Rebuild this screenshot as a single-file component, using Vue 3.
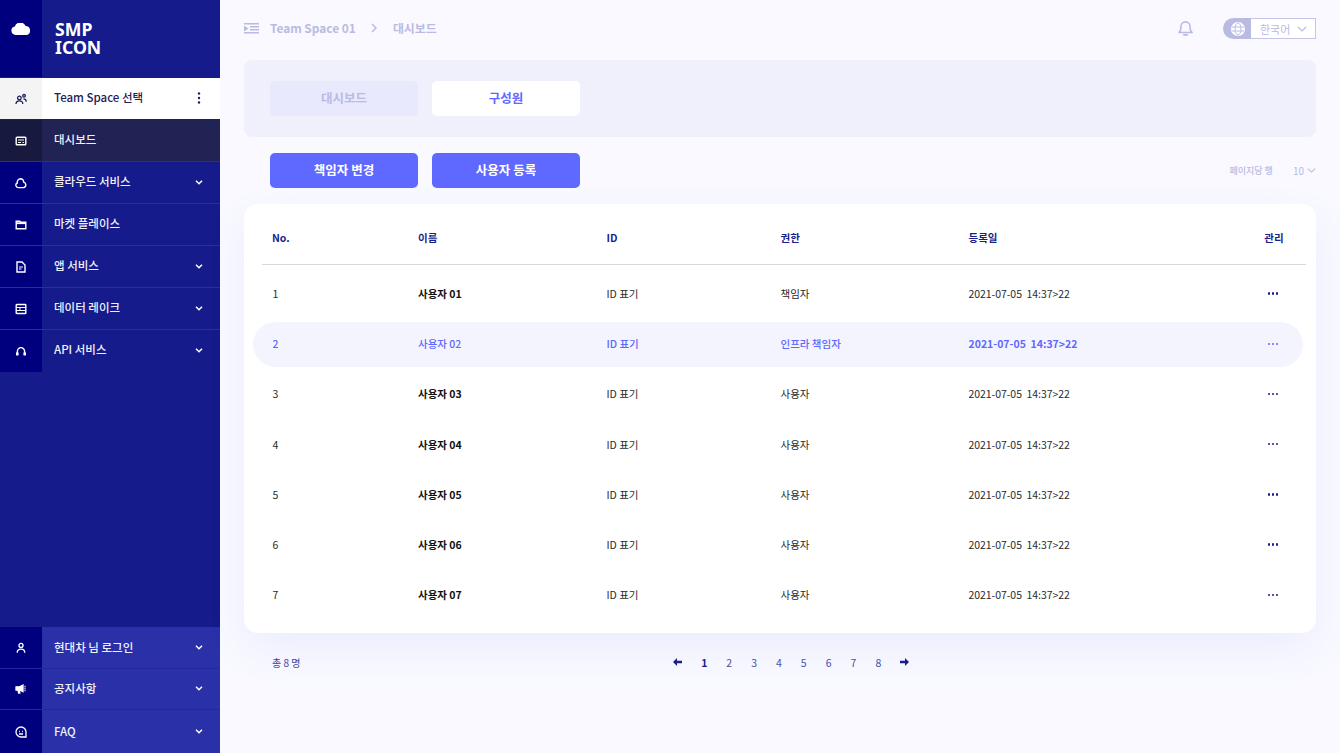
<script setup>
const topMenu = [
  { label: '대시보드', icon: 'dash', active: true },
  { label: '클라우드 서비스', icon: 'cloud', more: true },
  { label: '마켓 플레이스', icon: 'folder' },
  { label: '앱 서비스', icon: 'doc', more: true },
  { label: '데이터 레이크', icon: 'data', more: true },
  { label: 'API 서비스', icon: 'head', more: true },
]
const bottomMenu = [
  { label: '현대차 님 로그인', icon: 'user' },
  { label: '공지사항', icon: 'mega' },
  { label: 'FAQ', icon: 'faq' },
]
const rows = [
  { no: 1, name: '사용자 01', role: '책임자' },
  { no: 2, name: '사용자 02', role: '인프라 책임자', hi: true },
  { no: 3, name: '사용자 03', role: '사용자' },
  { no: 4, name: '사용자 04', role: '사용자' },
  { no: 5, name: '사용자 05', role: '사용자' },
  { no: 6, name: '사용자 06', role: '사용자' },
  { no: 7, name: '사용자 07', role: '사용자' },
]
const pages = [1, 2, 3, 4, 5, 6, 7, 8]
</script>

<template>
  <div class="app">
    <aside class="side">
      <div class="brand">
        <div class="rail brand-rail">
          <svg width="20" height="12" viewBox="0 0 20 12"><path d="M4.600 12a4.300 4.300 0 0 1-.8-8.500A5.800 5.800 0 0 1 14.600 3 4.600 4.600 0 0 1 15.800 12Z" fill="#fff"/></svg>
        </div>
        <div class="brand-name">SMP<br>ICON</div>
      </div>
      <div class="team">
        <div class="rail team-rail">
          <svg width="12" height="12" viewBox="0 0 12 12" fill="none" stroke="#1e2157" stroke-width="1.300"><circle cx="4.400" cy="5" r="1.800"/><path d="M1 11c0-2 1.300-3.200 3.400-3.200S7.800 9 7.800 11"/><circle cx="9" cy="2.800" r="1.300"/><path d="M8.400 5.800c1.700 0 2.800 1 2.900 2.800"/></svg>
        </div>
        <div class="item-label team-label">Team Space 선택</div>
        <svg class="kebab" width="4" height="12" viewBox="0 0 4 12" fill="#1e2157"><circle cx="2" cy="1.500" r="1.200"/><circle cx="2" cy="6" r="1.200"/><circle cx="2" cy="10.500" r="1.200"/></svg>
      </div>
      <nav class="menu">
        <div v-for="m in topMenu" :key="m.label" class="item" :class="{ active: m.active }">
          <div class="rail">
            <svg width="12" height="12" viewBox="0 0 12 12" fill="none" stroke="#fff" stroke-width="1.400">
              <template v-if="m.icon === 'dash'"><rect x="1.200" y="2.200" width="9.600" height="7.600" rx=".8"/><path d="M3 5h6M3 7.500h3M7.500 7.500H9" stroke-width="1"/></template>
              <path v-else-if="m.icon === 'cloud'" d="M3.200 10.600a2.400 2.400 0 0 1-.9-4.600A3.400 3.400 0 0 1 5.600 1.800a3.200 3.200 0 0 1 3.100 3.300 2.800 2.800 0 0 1-.3 5.500Z"/>
              <template v-else-if="m.icon === 'folder'"><path d="M1.200 2.200h3.600l.8 1h5.200v6.600H1.200Z"/><path d="M1.200 4.200h9.600" stroke-width="1.800"/></template>
              <template v-else-if="m.icon === 'doc'"><path d="M2 1h5l3 3v7H2Z" fill="none"/><path d="M4 6h4M4 8h2.500" stroke-width="1.100"/></template>
              <template v-else-if="m.icon === 'data'"><rect x="1.200" y="1.500" width="9.600" height="9" rx=".6"/><path d="M1 4.500h10M1 7.500h10M5 4.500v3" stroke-width="1"/></template>
              <template v-else><path d="M2.400 8V6.200a3.600 3.600 0 0 1 7.200 0V8"/><path d="M4.500 3.500L6 2l1.500 1.500" stroke-width="1"/><rect x="1" y="7.200" width="2.600" height="3.400" rx=".9" fill="#fff" stroke="none"/><rect x="8.400" y="7.200" width="2.600" height="3.400" rx=".9" fill="#fff" stroke="none"/></template>
            </svg>
          </div>
          <div class="item-label">{{ m.label }}</div>
          <svg v-if="m.more" class="chev" width="8" height="5" viewBox="0 0 8 5" fill="none" stroke="#fff" stroke-width="1.500"><path d="M1 .8l3 3 3-3"/></svg>
        </div>
      </nav>
      <div class="foot">
        <div v-for="m in bottomMenu" :key="m.label" class="item">
          <div class="rail">
            <svg width="12" height="12" viewBox="0 0 12 12" fill="none" stroke="#fff" stroke-width="1.300">
              <template v-if="m.icon === 'user'"><circle cx="6" cy="3.400" r="2"/><path d="M2.200 10.800c0-2.400 1.400-3.600 3.800-3.600s3.800 1.200 3.800 3.600"/></template>
              <template v-else-if="m.icon === 'mega'"><path d="M1 3.800h3.500L8 2v6.800L4.500 7H1Z" fill="#fff"/><path d="M3 7l.6 3h1.200l-.4-3"/><path d="M9.500 3.500h1.500M9.500 5.500h1.500M9.500 7.500h1.500" stroke-dasharray="1 1"/></template>
              <template v-else><path d="M6 1a5 5 0 0 1 5 5v5H6A5 5 0 0 1 6 1Z"/><path d="M4 5.500h.8M7.200 5.500H8M4 8h4"/></template>
            </svg>
          </div>
          <div class="item-label">{{ m.label }}</div>
          <svg class="chev" width="8" height="5" viewBox="0 0 8 5" fill="none" stroke="#fff" stroke-width="1.500"><path d="M1 .8l3 3 3-3"/></svg>
        </div>
      </div>
    </aside>

    <main class="main">
      <header class="top">
        <svg class="crumb-ico" width="15" height="11" viewBox="0 0 15 11" fill="#b9bbe3"><rect width="15" height="1.500"/><rect x="6" y="3" width="9" height="1.500"/><rect x="6" y="6" width="9" height="1.500"/><rect y="9" width="15" height="1.500"/><path d="M0 2.500l4.500 3-4.500 3Z"/></svg>
        <span class="crumb first">Team Space 01</span>
        <svg class="crumb-sep" width="6" height="10" viewBox="0 0 6 10" fill="none" stroke="#b9bbe3" stroke-width="1.500"><path d="M1 1l4 4-4 4"/></svg>
        <span class="crumb">대시보드</span>
        <div class="grow"></div>
        <svg class="bell" width="15" height="15" viewBox="0 0 15 15" fill="none" stroke="#b9bbe3" stroke-width="1.600"><path d="M1 11.500c1.300-1 1.900-2.400 1.900-4.300V5.500a4.600 4.600 0 0 1 9.200 0v1.700c0 1.900.6 3.300 1.900 4.300Z" stroke-linejoin="round"/><path d="M5.800 13.800h3.400" stroke-width="1.800" stroke-linecap="round"/></svg>
        <div class="lang">
          <div class="lang-ico">
            <svg width="14" height="14" viewBox="0 0 14 14" fill="#fff"><circle cx="7" cy="7" r="7"/><g fill="none" stroke="#b9bbe3" stroke-width="1"><ellipse cx="7" cy="7" rx="3" ry="6"/><path d="M1 5h12M1 9h12"/></g></svg>
          </div>
          <div class="lang-box">
            <span>한국어</span>
            <svg width="10" height="6" viewBox="0 0 10 6" fill="none" stroke="#b9bbe3" stroke-width="1.200"><path d="M1 1l4 4 4-4"/></svg>
          </div>
        </div>
      </header>

      <section class="tabs">
        <div class="tab off">대시보드</div>
        <div class="tab on">구성원</div>
      </section>

      <section class="actions">
        <button class="btn">책임자 변경</button>
        <button class="btn">사용자 등록</button>
        <div class="grow"></div>
        <span class="per">페이지당 행</span>
        <span class="per-num">10</span>
        <svg width="9" height="5" viewBox="0 0 9 5" fill="none" stroke="#b9bbe3" stroke-width="1.100"><path d="M.7.700l3.800 3.400L8.300.7"/></svg>
      </section>

      <section class="card">
        <div class="thead">
          <div class="c-no">No.</div>
          <div class="c-name">이름</div>
          <div class="c-id">ID</div>
          <div class="c-role">권한</div>
          <div class="c-date">등록일</div>
          <div class="c-act">관리</div>
        </div>
        <div v-for="r in rows" :key="r.no" class="row" :class="{ hi: r.hi }">
          <div class="c-no">{{ r.no }}</div>
          <div class="c-name strong">{{ r.name }}</div>
          <div class="c-id">ID 표기</div>
          <div class="c-role">{{ r.role }}</div>
          <div class="c-date">2021-07-05&nbsp; 14:37&gt;22</div>
          <div class="c-act dots"><i></i><i></i><i></i></div>
        </div>
      </section>

      <footer class="pager">
        <span class="total">총 8 명</span>
        <div class="pages">
          <svg class="arrow" width="9" height="8" viewBox="0 0 9 8" fill="#1a1f8c"><path d="M4 0v2.800h5v2.400H4V8L0 4Z"/></svg>
          <span v-for="p in pages" :key="p" class="pg" :class="{ cur: p === 1 }">{{ p }}</span>
          <svg class="arrow" width="9" height="8" viewBox="0 0 9 8" fill="#1a1f8c"><path d="M5 0v2.800H0v2.400h5V8l4-4Z"/></svg>
        </div>
      </footer>
    </main>
  </div>
</template>

<style scoped>
.app { display: flex; width: 1340px; height: 753px; overflow: hidden; background: #f9f9ff; font-family: "Noto Sans CJK KR", "Noto Sans", sans-serif; color: #222; }
.side { width: 220px; height: 753px; flex: none; display: flex; flex-direction: column; background: #151b8a; color: #fff; }
.rail { width: 42px; flex: none; align-self: stretch; display: flex; align-items: center; justify-content: center; background: #00007f; }
.brand { height: 77px; display: flex; flex: none; }
.brand-rail svg { margin-bottom: 19px; }
.brand-name { margin: 19.500px 0 0 13px; font-family: "Noto Sans", "Noto Sans CJK KR", sans-serif; font-size: 17.700px; line-height: 18px; font-weight: 700; }
.team { height: 41px; flex: none; display: flex; align-items: center; background: #fff; margin-top: 1px; color: #1e2157; }
.team-rail { background: #f4f4f4; }
.item-label { margin-left: 12px; font-size: 11.500px; font-weight: 500; flex: 1; line-height: 16px; padding-bottom: 4px; }
.foot .item-label { padding-bottom: 2px; }
.team-label { color: #1e2157; padding-bottom: 4px; }
.kebab { margin: 0 19px 2px 0; }
.menu { flex: 1; background: #151b8a; padding-top: 1px; }
.item { height: 42px; box-sizing: border-box; display: flex; align-items: center; border-bottom: 1px solid #2b2f96; color: #f0f0fa; }
.menu .item:last-child { border-bottom: 0; }
.item.active { background: #212354; border-bottom-color: #2b2f80; }
.item.active .rail { background: #18193f; }
.chev { margin: 0 17px 1px 0; }
.foot { flex: none; background: #2a30a8; }
.foot .item { border-bottom: 1px solid #2328a0; }
.foot .item:nth-child(2) { height: 41px; }
.foot .item:last-child { height: 43px; border-bottom: 0; }

.main { flex: 1; min-width: 0; padding: 0 24px; display: flex; flex-direction: column; }
.top { height: 60px; flex: none; display: flex; align-items: center; padding-bottom: 3px; box-sizing: border-box; }
.grow { flex: 1; }
.crumb { font-size: 11.900px; font-weight: 700; color: #b9bbe3; line-height: 18px; padding-bottom: 2px; }
.crumb.first { margin-left: 11px; }
.crumb-sep { margin: 0 16px 2px 15px; }
.bell { margin-right: 30px; }
.lang { display: flex; height: 21px; width: 93px; }
.lang-ico { width: 28px; background: #b9bbe3; border-radius: 11px 0 0 11px; display: flex; align-items: center; justify-content: center; flex: none; padding-left: 2px; box-sizing: border-box; }
.lang-box { flex: 1; background: #fff; border: 1px solid #c3c5ea; border-left: 0; display: flex; align-items: center; justify-content: space-between; padding: 0 8px 0 9px; font-size: 11px; color: #b9bbe3; }
.tabs { height: 77px; flex: none; background: #f0f0fd; border-radius: 8px; display: flex; align-items: center; gap: 14px; padding-left: 26px; }
.tab { width: 148px; height: 35px; border-radius: 5px; display: flex; align-items: center; justify-content: center; font-size: 12.500px; font-weight: 700; line-height: 16px; padding-bottom: 2px; box-sizing: border-box; }
.tab.off { background: #e8e9fc; color: #b9bbe3; }
.tab.on { background: #fff; color: #5f68ff; }
.actions { height: 35px; flex: none; margin-top: 16px; padding-left: 26px; display: flex; align-items: center; gap: 14px; }
.btn { width: 148px; height: 35px; border: 0; border-radius: 5px; background: #5f68ff; color: #fff; font: 700 12.500px "Noto Sans CJK KR", sans-serif; padding: 0 0 3px; }
.per { font-size: 9px; color: #b9bbe3; font-weight: 500; margin-right: 6px; }
.per-num { font-size: 10px; color: #b9bbe3; margin-right: -11px; }
.card { height: 429px; flex: none; margin-top: 16px; background: #fff; border-radius: 14px; padding: 0 13px 0 9px; box-sizing: border-box; box-shadow: 0 16px 40px rgba(95, 104, 255, .08); }
.thead { height: 61px; margin: 0 -3px 7px 9px; display: flex; align-items: center; padding-top: 7px; box-sizing: border-box; border-bottom: 1px solid #d8d8d8; font-size: 10.500px; font-weight: 700; color: #1a1f8c; }
.thead .c-no { margin-left: 10px; width: 146px; }
.thead .c-name { width: 188.500px; }
.thead .c-id { width: 174px; }
.thead .c-role { width: 188px; }
.thead .c-date { flex: 1; }
.thead .c-act { width: 42px; margin-right: 11px; text-align: center; }
.row { height: 45px; margin-bottom: 5.220px; border-radius: 23px; display: flex; align-items: center; font-size: 10.500px; color: #2a2a2a; padding-bottom: 2px; box-sizing: border-box; }
.row .c-no { margin-left: 19.500px; width: 145.500px; }
.row .c-name { width: 188.500px; }
.row .c-id { width: 174px; }
.row .c-role { width: 188px; }
.row .c-date { flex: 1; letter-spacing: -.05px; }
.row .c-act { width: 40px; margin-right: 10px; }
.strong { font-weight: 700; color: #111; }
.hi { background: #f4f4fe; color: #5f68ff; font-weight: 500; }
.hi .strong { font-weight: 500; color: #5f68ff; }
.row.hi .c-date { font-weight: 700; letter-spacing: 0; }
.dots { display: flex; justify-content: center; gap: 2px; }
.dots i { width: 2.300px; height: 2.300px; border-radius: 50%; background: #1a1f8c; }
.hi .dots i { background: #5f68ff; }
.pager { height: 58px; flex: none; display: flex; align-items: center; padding-left: 28px; }
.total { font-size: 10px; color: #3f44a8; }
.pages { margin-left: 372px; display: flex; align-items: center; gap: 15.050px; font-size: 10.500px; color: #4a4fa8; }
.pages .arrow:first-child { margin-left: 1px; margin-right: 2px; }
.pages .arrow:last-child { margin-left: 2px; }
.pg { width: 9.800px; text-align: center; }
.pg.cur { font-weight: 700; color: #1a1f8c; }
.arrow { flex: none; }
</style>

<style>
html, body { margin: 0; }
</style>
